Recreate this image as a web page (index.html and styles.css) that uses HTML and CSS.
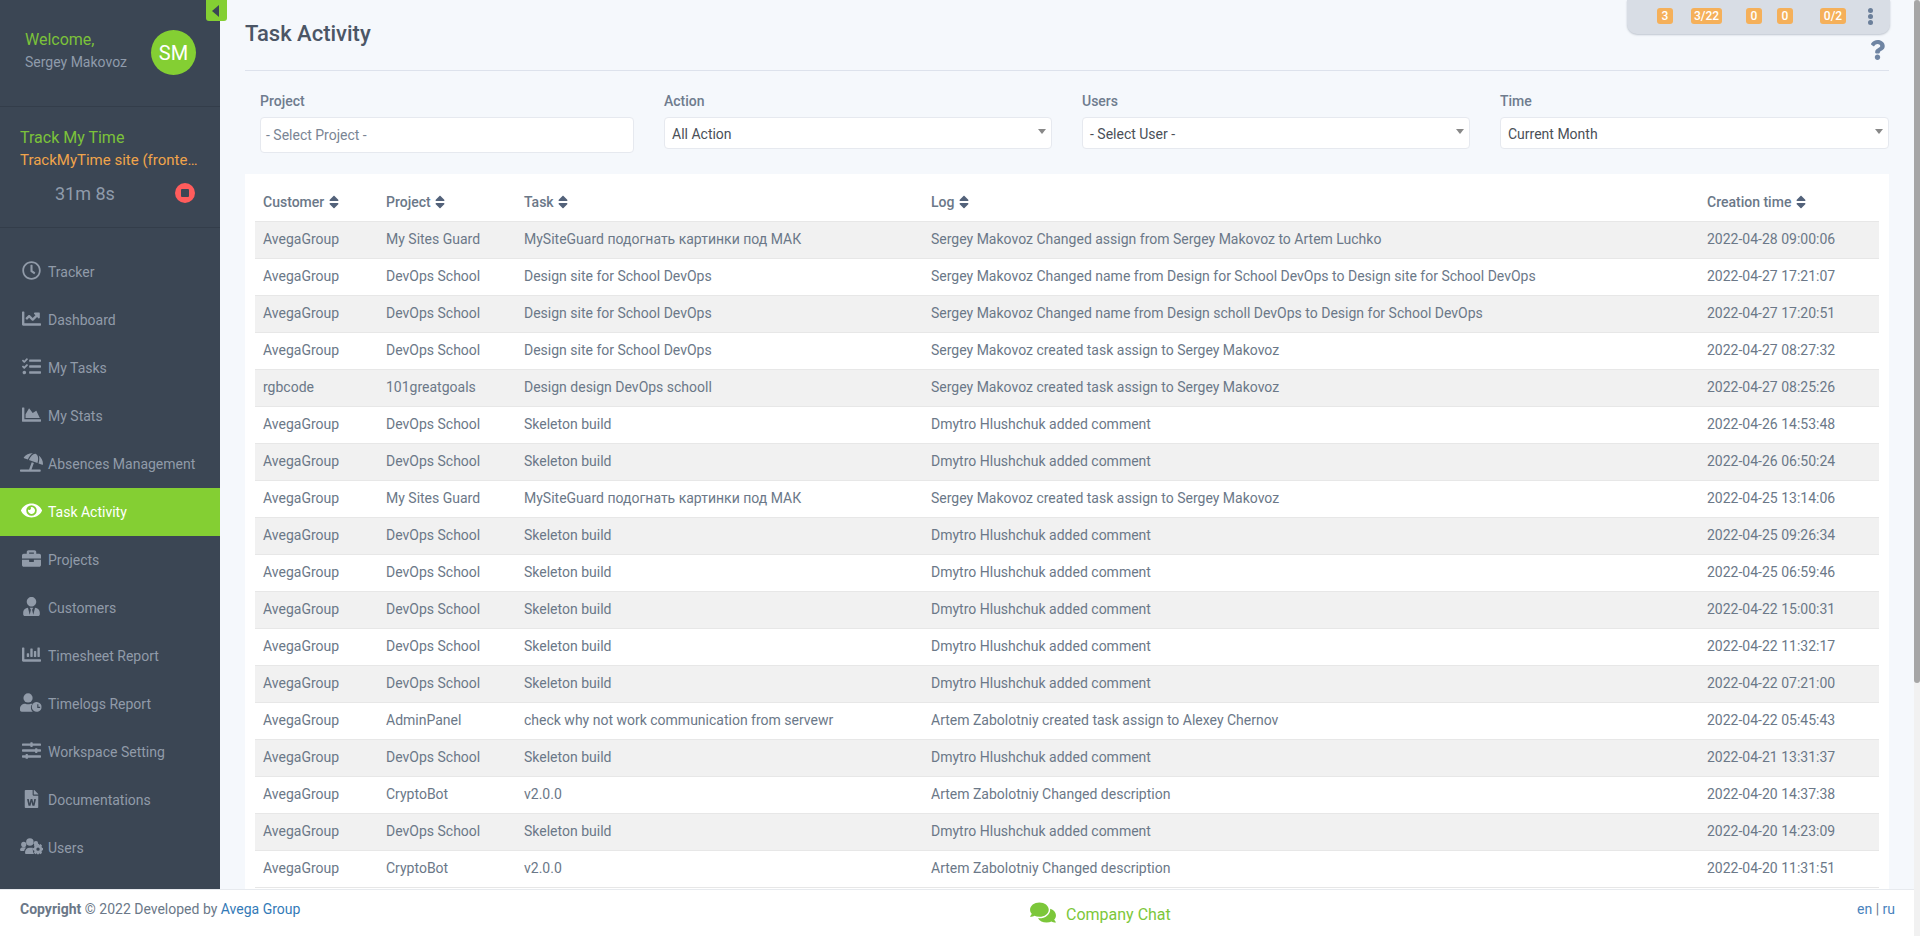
FILE: index.html
```html
<!DOCTYPE html>
<html lang="en">
<head>
<meta charset="utf-8">
<title>Task Activity</title>
<link rel="stylesheet" href="styles.css">
</head>
<body>
<svg class="defs" width="0" height="0" aria-hidden="true">
  <symbol id="i-sort" viewBox="0 0 320 512"><path d="M41 288h238c21.400 0 32.100 25.900 17 41L177 448c-9.400 9.400-24.600 9.400-33.900 0L24 329c-15.100-15.100-4.400-41 17-41zm255-105L177 64c-9.400-9.400-24.600-9.400-33.900 0L24 183c-15.100 15.100-4.400 41 17 41h238c21.400 0 32.100-25.900 17-41z"/></symbol>
  <symbol id="i-clock" viewBox="0 0 512 512"><path d="M256 8C119 8 8 119 8 256s111 248 248 248 248-111 248-248S393 8 256 8zm0 448c-110.500 0-200-89.500-200-200S145.500 56 256 56s200 89.500 200 200-89.500 200-200 200zm61.800-104.400l-84.900-61.700c-3.100-2.300-4.900-5.900-4.900-9.700V116c0-6.600 5.400-12 12-12h32c6.600 0 12 5.400 12 12v141.700l66.800 48.600c5.400 3.900 6.500 11.400 2.600 16.800L334.600 349c-3.900 5.300-11.400 6.500-16.800 2.600z"/></symbol>
  <symbol id="i-line" viewBox="0 0 512 512"><path d="M496 384H64V80c0-8.840-7.160-16-16-16H16C7.160 64 0 71.160 0 80v336c0 17.670 14.330 32 32 32h464c8.840 0 16-7.160 16-16v-32c0-8.840-7.160-16-16-16zM464 96H345.940c-21.380 0-32.090 25.850-16.970 40.970l32.400 32.400L288 242.750l-73.370-73.370c-12.500-12.500-32.760-12.500-45.250 0l-68.690 68.690c-6.250 6.250-6.250 16.380 0 22.630l22.620 22.620c6.250 6.250 16.380 6.250 22.630 0L192 237.250l73.370 73.370c12.500 12.500 32.760 12.500 45.250 0l96-96 32.400 32.400c15.120 15.120 40.970 4.410 40.970-16.970V112c.01-8.840-7.150-16-15.990-16z"/></symbol>
  <symbol id="i-tasks" viewBox="0 0 512 512"><path d="M139.610 35.500a12 12 0 0 0-17 0L58.930 98.810l-22.700-22.120a12 12 0 0 0-17 0L3.530 92.410a12 12 0 0 0 0 17l47.590 47.400a12.780 12.780 0 0 0 17.610 0l15.590-15.620L156.520 69a12.090 12.090 0 0 0 .09-17zm0 159.190a12 12 0 0 0-17 0l-63.680 63.720-22.700-22.100a12 12 0 0 0-17 0L3.530 252a12 12 0 0 0 0 17L51 316.500a12.770 12.770 0 0 0 17.600 0l15.700-15.690 72.200-72.220a12 12 0 0 0 .09-16.900zM64 368c-26.490 0-48.590 21.500-48.590 48S37.530 464 64 464a48 48 0 0 0 0-96zm432 16H208a16 16 0 0 0-16 16v32a16 16 0 0 0 16 16h288a16 16 0 0 0 16-16v-32a16 16 0 0 0-16-16zm0-320H208a16 16 0 0 0-16 16v32a16 16 0 0 0 16 16h288a16 16 0 0 0 16-16V80a16 16 0 0 0-16-16zm0 160H208a16 16 0 0 0-16 16v32a16 16 0 0 0 16 16h288a16 16 0 0 0 16-16v-32a16 16 0 0 0-16-16z"/></symbol>
  <symbol id="i-area" viewBox="0 0 512 512"><path d="M500 384c6.600 0 12 5.400 12 12v40c0 6.600-5.400 12-12 12H12c-6.600 0-12-5.400-12-12V76c0-6.600 5.400-12 12-12h40c6.600 0 12 5.400 12 12v308h436zM372.700 159.500L288 216l-85.300-113.700c-5.100-6.800-15.500-6.300-19.900 1L96 248v104h384l-89.900-187.800c-3.200-6.500-11.400-8.700-17.400-4.700z"/></symbol>
  <symbol id="i-beach" viewBox="0 0 640 512"><path d="M115.380 136.900l102.110 37.180c35.190-81.540 86.210-144.290 139-173.700-95.880-4.890-188.780 36.960-248.530 111.800-6.690 8.400-2.680 21.050 7.420 24.720zm132.250 48.160l238.480 86.830c35.760-121.380 18.700-231.660-42.630-253.980-7.400-2.690-15.130-4-23.090-4-58.020.01-128.270 69.170-172.760 171.150zM521.480 60.500c6.220 16.300 10.830 34.600 13.200 55.190 5.740 49.890-1.420 108.230-18.950 166.980l102.620 37.360c10.090 3.670 21.310-3.430 21.570-14.170 2.320-95.690-41.910-187.440-118.440-245.360zM560 447.980H321.060L386 269.500l-60.140-21.900-72.900 200.370H16c-8.840 0-16 7.160-16 16.010v32.010C0 504.830 7.160 512 16 512h544c8.840 0 16-7.170 16-16.010v-32.010c0-8.840-7.160-16-16-16z"/></symbol>
  <symbol id="i-eye" viewBox="0 0 576 512"><path d="M572.520 241.400C518.290 135.590 410.930 64 288 64S57.680 135.640 3.480 241.410a32.350 32.350 0 0 0 0 29.190C57.710 376.410 165.070 448 288 448s230.320-71.640 284.520-177.410a32.350 32.350 0 0 0 0-29.190zM288 400a144 144 0 1 1 144-144 143.930 143.930 0 0 1-144 144zm0-240a95.310 95.310 0 0 0-25.310 3.790 47.850 47.850 0 0 1-66.900 66.900A95.780 95.780 0 1 0 288 160z"/></symbol>
  <symbol id="i-case" viewBox="0 0 512 512"><path d="M320 336c0 8.840-7.160 16-16 16h-96c-8.840 0-16-7.160-16-16v-48H0v144c0 25.600 22.400 48 48 48h416c25.600 0 48-22.400 48-48V288H320v48zm144-208h-80V80c0-25.600-22.400-48-48-48H176c-25.600 0-48 22.400-48 48v48H48c-25.600 0-48 22.400-48 48v80h512v-80c0-25.600-22.400-48-48-48zm-144 0H192V96h128v32z"/></symbol>
  <symbol id="i-tie" viewBox="0 0 448 512"><path d="M224 256c70.700 0 128-57.300 128-128S294.700 0 224 0 96 57.300 96 128s57.300 128 128 128zm95.800 32.600L272 480l-32-136 32-56h-96l32 56-32 136-47.800-191.400C56.900 292 0 350.300 0 422.400V464c0 26.500 21.500 48 48 48h352c26.500 0 48-21.500 48-48v-41.600c0-72.100-56.900-130.400-128.200-133.800z"/></symbol>
  <symbol id="i-bars" viewBox="0 0 512 512"><path d="M332.800 320h38.400c6.400 0 12.800-6.400 12.800-12.800V172.800c0-6.400-6.400-12.800-12.800-12.800h-38.400c-6.400 0-12.800 6.400-12.800 12.800v134.400c0 6.400 6.400 12.800 12.800 12.800zm96 0h38.400c6.400 0 12.800-6.400 12.800-12.800V76.800c0-6.400-6.400-12.800-12.800-12.800h-38.400c-6.400 0-12.800 6.400-12.800 12.800v230.400c0 6.400 6.400 12.800 12.800 12.800zm-288 0h38.400c6.400 0 12.800-6.400 12.800-12.800v-70.400c0-6.400-6.400-12.800-12.800-12.800h-38.400c-6.400 0-12.800 6.400-12.800 12.800v70.400c0 6.400 6.400 12.800 12.800 12.800zm96 0h38.400c6.400 0 12.800-6.400 12.800-12.800V108.800c0-6.400-6.400-12.800-12.800-12.800h-38.400c-6.400 0-12.800 6.400-12.800 12.800v198.400c0 6.400 6.400 12.800 12.800 12.800zM496 384H64V80c0-8.840-7.160-16-16-16H16C7.160 64 0 71.160 0 80v336c0 17.670 14.330 32 32 32h464c8.840 0 16-7.160 16-16v-32c0-8.840-7.160-16-16-16z"/></symbol>
  <symbol id="i-userclock" viewBox="0 0 640 512"><circle cx="224" cy="128" r="128"/><path d="M0 464v-41.600C0 348.200 60.200 288 134.400 288h16.700c22.300 10.200 47 16 72.900 16s50.600-5.800 72.900-16h16.700c12.500 0 24.500 1.700 36 4.900C321 322 304 355 304 392c0 44 17 84 45 112l8 8H48c-26.500 0-48-21.500-48-48z"/><path fill-rule="evenodd" d="M496 248a136 136 0 1 0 0 264 136 136 0 0 0 0-264zm-16 56h32v72h48v32h-80z"/></symbol>
  <symbol id="i-sliders" viewBox="0 0 512 512"><path d="M496 384H160v-16c0-8.800-7.200-16-16-16h-32c-8.800 0-16 7.200-16 16v16H16c-8.800 0-16 7.200-16 16v32c0 8.800 7.200 16 16 16h80v16c0 8.800 7.200 16 16 16h32c8.800 0 16-7.200 16-16v-16h336c8.800 0 16-7.200 16-16v-32c0-8.800-7.200-16-16-16zm0-160h-80v-16c0-8.800-7.200-16-16-16h-32c-8.800 0-16 7.200-16 16v16H16c-8.800 0-16 7.200-16 16v32c0 8.800 7.200 16 16 16h336v16c0 8.800 7.200 16 16 16h32c8.800 0 16-7.200 16-16v-16h80c8.800 0 16-7.200 16-16v-32c0-8.800-7.200-16-16-16zm0-160H288V48c0-8.800-7.200-16-16-16h-32c-8.800 0-16 7.200-16 16v16H16C7.200 64 0 71.200 0 80v32c0 8.800 7.200 16 16 16h208v16c0 8.800 7.200 16 16 16h32c8.800 0 16-7.200 16-16v-16h208c8.800 0 16-7.200 16-16V80c0-8.800-7.200-16-16-16z"/></symbol>
  <symbol id="i-word" viewBox="0 0 384 512"><path d="M224 136V0H24C10.700 0 0 10.700 0 24v464c0 13.300 10.700 24 24 24h336c13.300 0 24-10.700 24-24V160H248c-13.200 0-24-10.800-24-24zm57.100 120H305c7.700 0 13.400 7.100 11.700 14.700l-38 168c-1.200 5.500-6.100 9.300-11.700 9.300h-38c-5.500 0-10.300-3.800-11.600-9.100-25.800-103.500-20.800-81.200-25.600-110.500h-.5c-1.100 14.300-2.400 17.400-25.600 110.500-1.300 5.300-6.100 9.100-11.600 9.100H117c-5.600 0-10.500-3.900-11.700-9.400l-37.800-168c-1.700-7.500 4-14.600 11.700-14.600h24.500c5.700 0 10.700 4 11.800 9.700 15.600 78 20.100 109.500 21 122.200 1.600-10.200 7.300-32.700 29.400-122.700 1.300-5.400 6.100-9.100 11.700-9.100h29.100c5.600 0 10.400 3.800 11.700 9.200 24 100.400 28.800 124 29.600 129.400-.2-11.200-2.600-17.800 21.600-129.200 1-5.600 5.900-9.500 11.500-9.500zM384 121.900v6.100H256V0h6.100c6.400 0 12.500 2.500 17 7l97.900 98c4.500 4.500 7 10.600 7 16.900z"/></symbol>
  <symbol id="i-userscog" viewBox="0 0 24 17"><circle cx="3.900" cy="6.300" r="2.700"/><circle cx="10.300" cy="3.900" r="3.900"/><circle cx="16.600" cy="5" r="2.300"/><path d="M0 12.200c0-1.800 1.300-3 3-3h1.800c.6 0 1.100.2 1.500.5-1 .9-1.700 2-1.900 3.400H.9c-.5 0-.9-.4-.9-.9zM5.300 15.200v-.9c0-2.500 2.100-4.500 4.700-4.500h3.400c-.2 2.300.1 4.700 1.200 6.400H6.500c-.7 0-1.200-.4-1.200-1z"/><circle cx="18.800" cy="11.300" r="3" fill="none" stroke="currentColor" stroke-width="2.500"/><path d="M17.700 5.900h2.200l.4 1.900h-3zM17.700 16.700h2.200l.4-1.900h-3zM13.400 10.200v2.200l1.900.4V9.800zM24.200 10.200v2.200l-1.900.4V9.800zM14.500 7.500l1.600-1.500 1.500 1.300-2 2zM23 15l-1.600 1.500-1.500-1.300 2-2zM14.500 15l1.600 1.500 1.500-1.300-2-2zM23 7.500L21.400 6l-1.500 1.300 2 2z"/></symbol>
  <symbol id="i-chat" viewBox="0 0 576 512"><path d="M416 192c0-88.400-93.100-160-208-160S0 103.600 0 192c0 34.300 14.100 65.900 38 92-13.400 30.200-35.500 54.200-35.800 54.500-2.200 2.300-2.800 5.700-1.500 8.700S4.800 352 8 352c36.600 0 66.900-12.300 88.700-25 32.200 15.700 70.300 25 111.300 25 114.900 0 208-71.600 208-160zm122 220c23.900-26 38-57.700 38-92 0-66.900-53.500-124.200-129.300-148.100.9 6.600 1.300 13.300 1.300 20.100 0 105.900-107.700 192-240 192-10.800 0-21.300-.8-31.700-1.900C207.800 439.600 281.800 480 368 480c41 0 79.100-9.200 111.300-25 21.800 12.700 52.100 25 88.700 25 3.200 0 6.100-1.900 7.300-4.800 1.300-2.900.7-6.300-1.500-8.700-.3-.3-22.400-24.200-35.800-54.500z"/></symbol>
  <symbol id="i-question" viewBox="0 0 384 512"><path d="M202.021 0C122.202 0 70.503 32.703 29.914 91.026c-7.363 10.580-5.093 25.086 5.178 32.874l43.138 32.709c10.373 7.865 25.132 6.026 33.253-4.148 25.049-31.381 43.630-49.449 82.757-49.449 30.764 0 68.816 19.799 68.816 49.631 0 22.552-18.617 34.134-48.993 51.164-35.423 19.860-82.299 44.576-82.299 106.405V320c0 13.255 10.745 24 24 24h72.471c13.255 0 24-10.745 24-24v-5.773c0-42.860 125.268-44.645 125.268-160.627C377.504 66.256 286.902 0 202.021 0zM192 373.459c-38.196 0-69.271 31.075-69.271 69.271 0 38.195 31.075 69.270 69.271 69.270s69.271-31.075 69.271-69.271-31.075-69.270-69.271-69.270z"/></symbol>
</svg>

<div class="app">
  <aside class="sidebar">
    <button class="collapse" aria-label="Collapse"><span class="collapse-arrow"></span></button>
    <section class="profile">
      <div class="profile-text">
        <div class="welcome">Welcome,</div>
        <div class="username">Sergey Makovoz</div>
      </div>
      <div class="avatar">SM</div>
    </section>
    <section class="tracker">
      <div class="tracker-title">Track My Time</div>
      <div class="tracker-task">TrackMyTime site (fronte…</div>
      <div class="tracker-row">
        <span class="tracker-time">31m 8s</span>
        <span class="stop"><span class="stop-square"></span></span>
      </div>
    </section>
    <nav class="menu">
      <a class="menu-item"><span class="menu-icon"><svg class="ic-19"><use href="#i-clock"/></svg></span>Tracker</a>
      <a class="menu-item"><span class="menu-icon"><svg class="ic-19"><use href="#i-line"/></svg></span>Dashboard</a>
      <a class="menu-item"><span class="menu-icon"><svg class="ic-19"><use href="#i-tasks"/></svg></span>My Tasks</a>
      <a class="menu-item"><span class="menu-icon"><svg class="ic-19"><use href="#i-area"/></svg></span>My Stats</a>
      <a class="menu-item"><span class="menu-icon"><svg class="ic-wide"><use href="#i-beach"/></svg></span>Absences Management</a>
      <a class="menu-item active"><span class="menu-icon"><svg class="ic-eye"><use href="#i-eye"/></svg></span>Task Activity</a>
      <a class="menu-item"><span class="menu-icon"><svg class="ic-19"><use href="#i-case"/></svg></span>Projects</a>
      <a class="menu-item"><span class="menu-icon"><svg class="ic-tie"><use href="#i-tie"/></svg></span>Customers</a>
      <a class="menu-item"><span class="menu-icon"><svg class="ic-19"><use href="#i-bars"/></svg></span>Timesheet Report</a>
      <a class="menu-item"><span class="menu-icon"><svg class="ic-wide"><use href="#i-userclock"/></svg></span>Timelogs Report</a>
      <a class="menu-item"><span class="menu-icon"><svg class="ic-19"><use href="#i-sliders"/></svg></span>Workspace Setting</a>
      <a class="menu-item"><span class="menu-icon"><svg class="ic-word"><use href="#i-word"/></svg></span>Documentations</a>
      <a class="menu-item"><span class="menu-icon"><svg class="ic-wide"><use href="#i-userscog"/></svg></span>Users</a>
    </nav>
  </aside>

  <main class="main">
    <div class="stats-panel">
      <span class="badge b1">3</span>
      <span class="badge b2">3/22</span>
      <span class="badge b3">0</span>
      <span class="badge b4">0</span>
      <span class="badge b5">0/2</span>
      <span class="dots"><i></i><i></i><i></i></span>
    </div>
    <svg class="help"><use href="#i-question"/></svg>

    <header class="page-head"><h1>Task Activity</h1></header>

    <form class="filters">
      <div class="filter filter-project">
        <label>Project</label>
        <div class="control control-input">- Select Project -</div>
      </div>
      <div class="filter">
        <label>Action</label>
        <div class="control control-select">All Action</div>
      </div>
      <div class="filter">
        <label>Users</label>
        <div class="control control-select">- Select User -</div>
      </div>
      <div class="filter">
        <label>Time</label>
        <div class="control control-select">Current Month</div>
      </div>
    </form>

    <section class="card">
      <table class="grid">
        <colgroup><col class="c1"><col class="c2"><col class="c3"><col class="c4"><col class="c5"></colgroup>
        <thead>
          <tr>
            <th>Customer <svg class="sort"><use href="#i-sort"/></svg></th>
            <th>Project <svg class="sort"><use href="#i-sort"/></svg></th>
            <th>Task <svg class="sort"><use href="#i-sort"/></svg></th>
            <th>Log <svg class="sort"><use href="#i-sort"/></svg></th>
            <th>Creation time <svg class="sort"><use href="#i-sort"/></svg></th>
          </tr>
        </thead>
        <tbody>
          <tr><td>AvegaGroup</td><td>My Sites Guard</td><td>MySiteGuard подогнать картинки под МАК</td><td>Sergey Makovoz Changed assign from Sergey Makovoz to Artem Luchko</td><td>2022-04-28 09:00:06</td></tr>
          <tr><td>AvegaGroup</td><td>DevOps School</td><td>Design site for School DevOps</td><td>Sergey Makovoz Changed name from Design for School DevOps to Design site for School DevOps</td><td>2022-04-27 17:21:07</td></tr>
          <tr><td>AvegaGroup</td><td>DevOps School</td><td>Design site for School DevOps</td><td>Sergey Makovoz Changed name from Design scholl DevOps to Design for School DevOps</td><td>2022-04-27 17:20:51</td></tr>
          <tr><td>AvegaGroup</td><td>DevOps School</td><td>Design site for School DevOps</td><td>Sergey Makovoz created task assign to Sergey Makovoz</td><td>2022-04-27 08:27:32</td></tr>
          <tr><td>rgbcode</td><td>101greatgoals</td><td>Design design DevOps schooll</td><td>Sergey Makovoz created task assign to Sergey Makovoz</td><td>2022-04-27 08:25:26</td></tr>
          <tr><td>AvegaGroup</td><td>DevOps School</td><td>Skeleton build</td><td>Dmytro Hlushchuk added comment</td><td>2022-04-26 14:53:48</td></tr>
          <tr><td>AvegaGroup</td><td>DevOps School</td><td>Skeleton build</td><td>Dmytro Hlushchuk added comment</td><td>2022-04-26 06:50:24</td></tr>
          <tr><td>AvegaGroup</td><td>My Sites Guard</td><td>MySiteGuard подогнать картинки под МАК</td><td>Sergey Makovoz created task assign to Sergey Makovoz</td><td>2022-04-25 13:14:06</td></tr>
          <tr><td>AvegaGroup</td><td>DevOps School</td><td>Skeleton build</td><td>Dmytro Hlushchuk added comment</td><td>2022-04-25 09:26:34</td></tr>
          <tr><td>AvegaGroup</td><td>DevOps School</td><td>Skeleton build</td><td>Dmytro Hlushchuk added comment</td><td>2022-04-25 06:59:46</td></tr>
          <tr><td>AvegaGroup</td><td>DevOps School</td><td>Skeleton build</td><td>Dmytro Hlushchuk added comment</td><td>2022-04-22 15:00:31</td></tr>
          <tr><td>AvegaGroup</td><td>DevOps School</td><td>Skeleton build</td><td>Dmytro Hlushchuk added comment</td><td>2022-04-22 11:32:17</td></tr>
          <tr><td>AvegaGroup</td><td>DevOps School</td><td>Skeleton build</td><td>Dmytro Hlushchuk added comment</td><td>2022-04-22 07:21:00</td></tr>
          <tr><td>AvegaGroup</td><td>AdminPanel</td><td>check why not work communication from servewr</td><td>Artem Zabolotniy created task assign to Alexey Chernov</td><td>2022-04-22 05:45:43</td></tr>
          <tr><td>AvegaGroup</td><td>DevOps School</td><td>Skeleton build</td><td>Dmytro Hlushchuk added comment</td><td>2022-04-21 13:31:37</td></tr>
          <tr><td>AvegaGroup</td><td>CryptoBot</td><td>v2.0.0</td><td>Artem Zabolotniy Changed description</td><td>2022-04-20 14:37:38</td></tr>
          <tr><td>AvegaGroup</td><td>DevOps School</td><td>Skeleton build</td><td>Dmytro Hlushchuk added comment</td><td>2022-04-20 14:23:09</td></tr>
          <tr><td>AvegaGroup</td><td>CryptoBot</td><td>v2.0.0</td><td>Artem Zabolotniy Changed description</td><td>2022-04-20 11:31:51</td></tr>
        </tbody>
      </table>
    </section>
  </main>
</div>

<footer class="footer">
  <div class="copyright"><strong>Copyright</strong> © 2022 Developed by <a>Avega Group</a></div>
  <a class="chat"><svg class="chat-icon"><use href="#i-chat"/></svg>Company Chat</a>
  <div class="lang"><a>en</a> | <a>ru</a></div>
</footer>
<div class="scrollbar"><div class="scroll-thumb"></div></div>
</body>
</html>
```
FILE: styles.css
```css
* { box-sizing: border-box; }
html, body { height: 100%; }
body {
  margin: 0;
  height: 936px;
  overflow: hidden;
  display: flex;
  flex-direction: column;
  position: relative;
  font-family: Roboto, "Noto Sans CJK SC", sans-serif;
  font-size: 14px;
  color: #6b7888;
  background: #f5f8fc;
}
.defs { position: absolute; }
svg { fill: currentColor; }

.app { flex: 1; min-height: 0; display: flex; }

/* sidebar */
.sidebar { width: 220px; flex: none; background: #3b4654; position: relative; color: #919ba9; }
.collapse {
  position: absolute; top: 0; left: 206px; width: 21px; height: 21px;
  padding: 0; border: 0; border-radius: 0 0 3px 3px; background: #84cf33;
  display: flex; align-items: center; justify-content: center; z-index: 2;
}
.collapse-arrow {
  width: 0; height: 0; border-style: solid;
  border-width: 6.500px 7px 6.500px 0; border-color: transparent #3b4654 transparent transparent;
  margin-right: 3px;
}
.profile {
  height: 107px; padding: 29px 24px 0 25px;
  border-bottom: 1px solid #333d4a;
  display: flex; justify-content: space-between; align-items: flex-start;
}
.welcome { font-size: 16px; line-height: 22px; color: #7cc23a; }
.username { font-size: 14px; line-height: 20px; margin-top: 1px; color: #8f9bab; }
.avatar {
  width: 45px; height: 45px; border-radius: 50%; background: #84cf33; color: #fff;
  font-size: 20px; display: flex; align-items: center; justify-content: center; flex: none; margin-top: 1px;
}
.tracker { height: 121px; padding: 20px 20px 0; border-bottom: 1px solid #333d4a; }
.tracker-title { font-size: 16px; line-height: 22px; color: #7cc23a; }
.tracker-task { font-size: 15px; line-height: 20px; margin-top: 1px; color: #f0a44b; white-space: nowrap; }
.tracker-row { display: flex; align-items: center; justify-content: space-between; margin-top: 12px; padding-left: 35px; height: 22px; }
.tracker-time { font-size: 18px; color: #8f9bab; }
.stop {
  width: 20px; height: 20px; border-radius: 50%; background: #ff5c5c;
  display: flex; align-items: center; justify-content: center; margin-right: 5px;
}
.stop-square { width: 8px; height: 8px; background: #3b4654; border-radius: 1px; }
.menu { padding-top: 20px; }
.menu-item { height: 48px; display: flex; align-items: center; padding-left: 20px; color: #919ba9; font-size: 14px; }
.menu-item.active { background: #84cf33; color: #fff; }
.menu-icon { width: 28px; flex: none; padding: 0 5px 3px 0; display: flex; align-items: center; justify-content: center; }
.ic-19 { width: 19px; height: 19px; }
.ic-wide { width: 23px; height: 19px; flex: none; }
.ic-eye { width: 21px; height: 19px; }
.ic-tie { width: 17px; height: 19px; }
.ic-word { width: 15px; height: 18px; }

/* main */
.main { flex: 1; min-width: 0; padding: 0 31px 0 25px; position: relative; overflow: hidden; display: flex; flex-direction: column; }
.stats-panel {
  position: absolute; top: 0; left: 1407px; width: 263px; height: 34px;
  background: #d8dde5; border-radius: 0 0 10px 10px; box-shadow: 0 1px 2px rgba(90,100,120,.35);
}
.badge {
  position: absolute; top: 8px; height: 16px; border-radius: 3px; background: #f5b05a; color: #fff;
  font-size: 12px; font-weight: 500; line-height: 16px; text-align: center;
}
.b1 { left: 30px; width: 16px; }
.b2 { left: 64px; width: 31px; }
.b3 { left: 119px; width: 16px; }
.b4 { left: 150px; width: 16px; }
.b5 { left: 193px; width: 26px; }
.dots { position: absolute; left: 241px; top: 8px; display: flex; flex-direction: column; gap: 1px; }
.dots i { width: 5px; height: 5px; border-radius: 50%; background: #6b7f9a; }
.help { position: absolute; left: 1650px; top: 40px; width: 15px; height: 20px; color: #6f85a3; }

.page-head { flex: none; height: 71px; border-bottom: 1px solid #dde2ec; padding-top: 21px; }
h1 { margin: 0; font-size: 22px; line-height: 26px; font-weight: 500; color: #4b5666; }

.filters { flex: none; display: grid; grid-template-columns: 374px 388px 388px 388.700px; column-gap: 30px; padding: 21px 0 0 15px; height: 103px; }
.filter label { display: block; font-size: 14px; font-weight: 500; line-height: 18px; height: 25px; color: #6f7c8e; }
.control { background: #fff; border: 1px solid #e6e9ef; border-radius: 4px; white-space: nowrap; }
.control-input { height: 36px; line-height: 35px; padding-left: 5px; color: #7a8594; }
.control-select { height: 32px; line-height: 33px; padding-left: 7px; color: #4a4f57; position: relative; }
.control-select::after {
  content: ""; position: absolute; right: 5px; top: 11px; width: 0; height: 0;
  border-style: solid; border-width: 5px 4px 0; border-color: #888 transparent transparent;
}

/* table */
.card { flex: 1; background: #fff; padding: 10px 10px 0 10px; }
.grid { width: 100%; border-collapse: collapse; table-layout: fixed; }
.c1 { width: 123px; }
.c2 { width: 138px; }
.c3 { width: 407px; }
.c4 { width: 776px; }
.grid th, .grid td { padding: 0 8px; height: 37px; text-align: left; white-space: nowrap; overflow: hidden; border-bottom: 1px solid #e7e7e7; }
.grid td { padding-bottom: 2px; }
.grid th { font-weight: 500; color: #6b7888; }
.grid tbody tr:nth-child(odd) { background: #f1f1f1; }
.sort { width: 10px; height: 16px; color: #53627a; vertical-align: -3px; margin-left: 1px; }

/* footer */
.footer {
  flex: none; height: 47px; background: #fff; border-top: 1px solid #e7eaee;
  position: relative; display: flex; justify-content: space-between; padding: 10px 25px 0 20px;
}
.copyright { line-height: 18px; color: #6b7888; }
.copyright strong { font-weight: 700; }
.copyright a { color: #337ab7; }
.lang a { color: #4a83bd; }
.lang { line-height: 18px; color: #6b7888; }
.chat {
  position: absolute; left: 1030px; top: 13px; display: flex; align-items: center; gap: 10px;
  font-size: 16px; line-height: 24px; color: #7cc73a;
}
.chat-icon { width: 26px; height: 23px; margin-top: -5px; color: #7cc73a; }

.scrollbar { position: absolute; top: 0; right: 0; bottom: 0; width: 6px; background: #f1f1f1; }
.scroll-thumb { height: 683px; background: #a6a6a6; border-radius: 3px; }
```
